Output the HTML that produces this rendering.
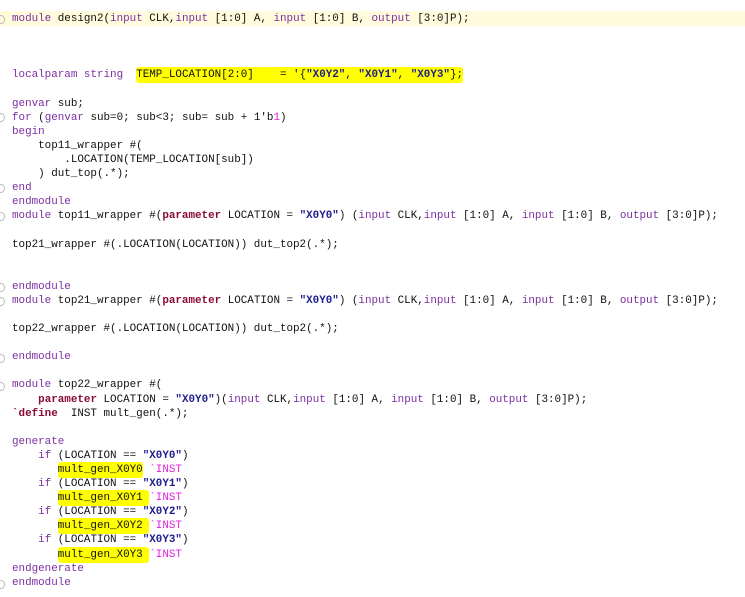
<!DOCTYPE html>
<html><head><meta charset="utf-8"><style>
body{margin:0;background:#fff;width:745px;height:597px;overflow:hidden;position:relative}
pre{margin:0;position:absolute;left:12px;top:12px;font-family:"Liberation Mono","DejaVu Sans Mono",monospace;font-size:10.9px;line-height:14.1px;color:#111}
.k{color:#7b2fa0}.s{color:#1c1c8c;font-weight:bold}.p{color:#8a0a3a;font-weight:bold}.m{color:#e020e0}
.h{background:#ffff00;border-radius:3px;padding:2px 0}
.l1{position:absolute;left:0;top:11px;width:745px;height:15px;background:#fffbdc}
.f{position:absolute;left:-3px;width:6px;height:7px;border:1px solid #bbb;border-radius:50%}
</style></head><body>
<div class="l1"></div>
<div class="f" style="top:15px"></div>
<div class="f" style="top:113px"></div>
<div class="f" style="top:184px"></div>
<div class="f" style="top:212px"></div>
<div class="f" style="top:283px"></div>
<div class="f" style="top:297px"></div>
<div class="f" style="top:354px"></div>
<div class="f" style="top:382px"></div>
<div class="f" style="top:580px"></div>
<pre><span class="k">module</span> design2(<span class="k">input</span> CLK,<span class="k">input</span> [1:0] A, <span class="k">input</span> [1:0] B, <span class="k">output</span> [3:0]P);



<span class="k">localparam</span> <span class="k">string</span>  <span class="h">TEMP_LOCATION[2:0]    = '{<span class="s">"X0Y2"</span>, <span class="s">"X0Y1"</span>, <span class="s">"X0Y3"</span>};</span>

<span class="k">genvar</span> sub;
<span class="k">for</span> (<span class="k">genvar</span> sub=0; sub&lt;3; sub= sub + 1'b<span class="m">1</span>)
<span class="k">begin</span>
    top11_wrapper #(
        .LOCATION(TEMP_LOCATION[sub])
    ) dut_top(.*);
<span class="k">end</span>
<span class="k">endmodule</span>
<span class="k">module</span> top11_wrapper #(<span class="p">parameter</span> LOCATION = <span class="s">"X0Y0"</span>) (<span class="k">input</span> CLK,<span class="k">input</span> [1:0] A, <span class="k">input</span> [1:0] B, <span class="k">output</span> [3:0]P);

top21_wrapper #(.LOCATION(LOCATION)) dut_top2(.*);


<span class="k">endmodule</span>
<span class="k">module</span> top21_wrapper #(<span class="p">parameter</span> LOCATION = <span class="s">"X0Y0"</span>) (<span class="k">input</span> CLK,<span class="k">input</span> [1:0] A, <span class="k">input</span> [1:0] B, <span class="k">output</span> [3:0]P);

top22_wrapper #(.LOCATION(LOCATION)) dut_top2(.*);

<span class="k">endmodule</span>

<span class="k">module</span> top22_wrapper #(
    <span class="p">parameter</span> LOCATION = <span class="s">"X0Y0"</span>)(<span class="k">input</span> CLK,<span class="k">input</span> [1:0] A, <span class="k">input</span> [1:0] B, <span class="k">output</span> [3:0]P);
<span class="p">`define</span>  INST mult_gen(.*);

<span class="k">generate</span>
    <span class="k">if</span> (LOCATION == <span class="s">"X0Y0"</span>)
       <span class="h">mult_gen_X0Y0</span> <span class="m">`INST</span>
    <span class="k">if</span> (LOCATION == <span class="s">"X0Y1"</span>)
       <span class="h">mult_gen_X0Y1 </span><span class="m">`INST</span>
    <span class="k">if</span> (LOCATION == <span class="s">"X0Y2"</span>)
       <span class="h">mult_gen_X0Y2 </span><span class="m">`INST</span>
    <span class="k">if</span> (LOCATION == <span class="s">"X0Y3"</span>)
       <span class="h">mult_gen_X0Y3 </span><span class="m">`INST</span>
<span class="k">endgenerate</span>
<span class="k">endmodule</span></pre>
</body></html>
